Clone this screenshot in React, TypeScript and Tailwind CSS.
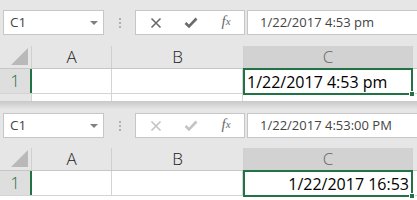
import type { ReactNode } from "react";

const GREEN = "#217346";

function Cross({ color }: { color: string }) {
  return (
    <svg width="12" height="12" viewBox="0 0 12 12">
      <path d="M1.5 1.5 L10.5 10.5 M10.5 1.5 L1.5 10.5" stroke={color} strokeWidth="1.6" fill="none" />
    </svg>
  );
}

function Check({ color }: { color: string }) {
  return (
    <svg width="14" height="12" viewBox="0 0 14 12">
      <path d="M1.5 6 L5 9.5 L12.5 1.5" stroke={color} strokeWidth="2.6" fill="none" />
    </svg>
  );
}

function Toolbar({ formula, disabled, top }: { formula: string; disabled?: boolean; top: "first" | "second" }) {
  const iconColor = disabled ? "#c4c4c4" : "#6a6a6a";
  return (
    <div
      className={
        top === "first"
          ? "flex h-[46px] items-start pt-[10px] bg-[#e6e6e6]"
          : "flex h-[47px] items-start pt-[12px] bg-gradient-to-b from-[#c8c8c8] via-[#e6e6e6] via-[18%] to-[#e6e6e6]"
      }
    >
      <div className="ml-[3px] flex h-[25px] w-[101px] items-center justify-between border border-[#c6c6c6] bg-white pl-[6px] pr-[5px]">
        <span className="text-[13.5px] text-[#444]">C1</span>
        <span className="h-0 w-0 border-x-[4px] border-t-[4px] border-x-transparent border-t-[#808080]" />
      </div>
      <div className="flex h-[25px] w-[31px] flex-col items-center justify-center gap-[2px]">
        <span className="h-[2px] w-[2px] bg-[#b0b0b0]" />
        <span className="h-[2px] w-[2px] bg-[#b0b0b0]" />
        <span className="h-[2px] w-[2px] bg-[#b0b0b0]" />
      </div>
      <div className="flex h-[25px] w-[110px] items-center border border-[#c6c6c6] bg-white">
        <span className="flex w-[38px] justify-center pl-[2px]">
          <Cross color={iconColor} />
        </span>
        <span className="flex w-[34px] justify-center">
          <Check color={iconColor} />
        </span>
        <span className="flex w-[36px] justify-center pb-[2px] text-[#6a6a6a] italic [font-family:'Liberation_Serif',serif]">
          <span className="text-[15px]">f</span>
          <span className="mt-[3px] text-[11px]">x</span>
        </span>
      </div>
      <div className="ml-[2px] flex h-[25px] flex-1 items-center border-y border-l border-[#c6c6c6] bg-white pl-[12px]">
        <span className="text-[13px] text-[#444]">{formula}</span>
      </div>
    </div>
  );
}

function Head({ w, children, sel }: { w: string; children?: ReactNode; sel?: boolean }) {
  return (
    <div
      className={`flex items-center justify-center border-r border-[#cfcfcf] text-[17px] font-light ${w} ${
        sel ? "bg-[#d2d2d2] text-[#666]" : "bg-[#e6e6e6] text-[#222]"
      }`}
    >
      {children}
    </div>
  );
}

function Sheet({ formula, value, alignRight, disabled, top }: {
  formula: string;
  value: string;
  alignRight?: boolean;
  disabled?: boolean;
  top: "first" | "second";
}) {
  return (
    <div className="flex flex-col">
      <Toolbar formula={formula} disabled={disabled} top={top} />
      <div className="flex h-[23px] border-b border-[#c6c6c6]">
        <div className="flex w-[32px] items-end justify-end border-r border-[#cfcfcf] bg-[#e6e6e6] pb-[3px] pr-[3px]">
          <svg width="17" height="17" viewBox="0 0 17 17">
            <path d="M17 0 L17 17 L0 17 Z" fill="#b9b9b9" />
          </svg>
        </div>
        <Head w="w-[80px]">A</Head>
        <Head w="w-[132px]">B</Head>
        <Head w="w-[169px]" sel>
          C
        </Head>
        <div className="flex-1 bg-[#e6e6e6]" />
      </div>
      <div className="flex h-[25px] border-b border-[#d4d4d4] bg-white">
        <div className="flex w-[32px] items-center justify-center border-r-2 border-[#217346] bg-[#dedede] text-[17px] font-light text-[#217346]">
          1
        </div>
        <div className="w-[80px] border-r border-[#d4d4d4]" />
        <div className="w-[131px] border-r border-[#d4d4d4]" />
        <div
          className={`relative -mb-[1px] -mt-[1px] flex h-[27px] w-[170px] items-center border-2 px-[2px] text-[16px] text-black ${
            alignRight ? "justify-end" : "justify-start"
          }`}
          style={{ borderColor: GREEN }}
        >
          {value}
          <span className="absolute -bottom-[4px] -right-[4px] h-[6px] w-[6px] border border-white bg-[#217346]" />
        </div>
        <div className="flex-1" />
      </div>
    </div>
  );
}

export default function App() {
  return (
    <div className="h-[200px] w-[417px] overflow-hidden bg-white [font-family:'Open_Sans',sans-serif]">
      <div className="flex h-[101px] flex-col overflow-hidden bg-white">
        <Sheet formula="1/22/2017 4:53 pm" value="1/22/2017 4:53 pm" top="first" />
        <div className="flex h-[7px]">
          <div className="w-[32px] border-r border-[#d4d4d4] bg-[#e6e6e6]" />
          <div className="w-[80px] border-r border-[#d4d4d4]" />
          <div className="w-[131px] border-r border-[#d4d4d4]" />
        </div>
      </div>
      <Sheet formula="1/22/2017 4:53:00 PM" value="1/22/2017 16:53" alignRight disabled top="second" />
    </div>
  );
}
